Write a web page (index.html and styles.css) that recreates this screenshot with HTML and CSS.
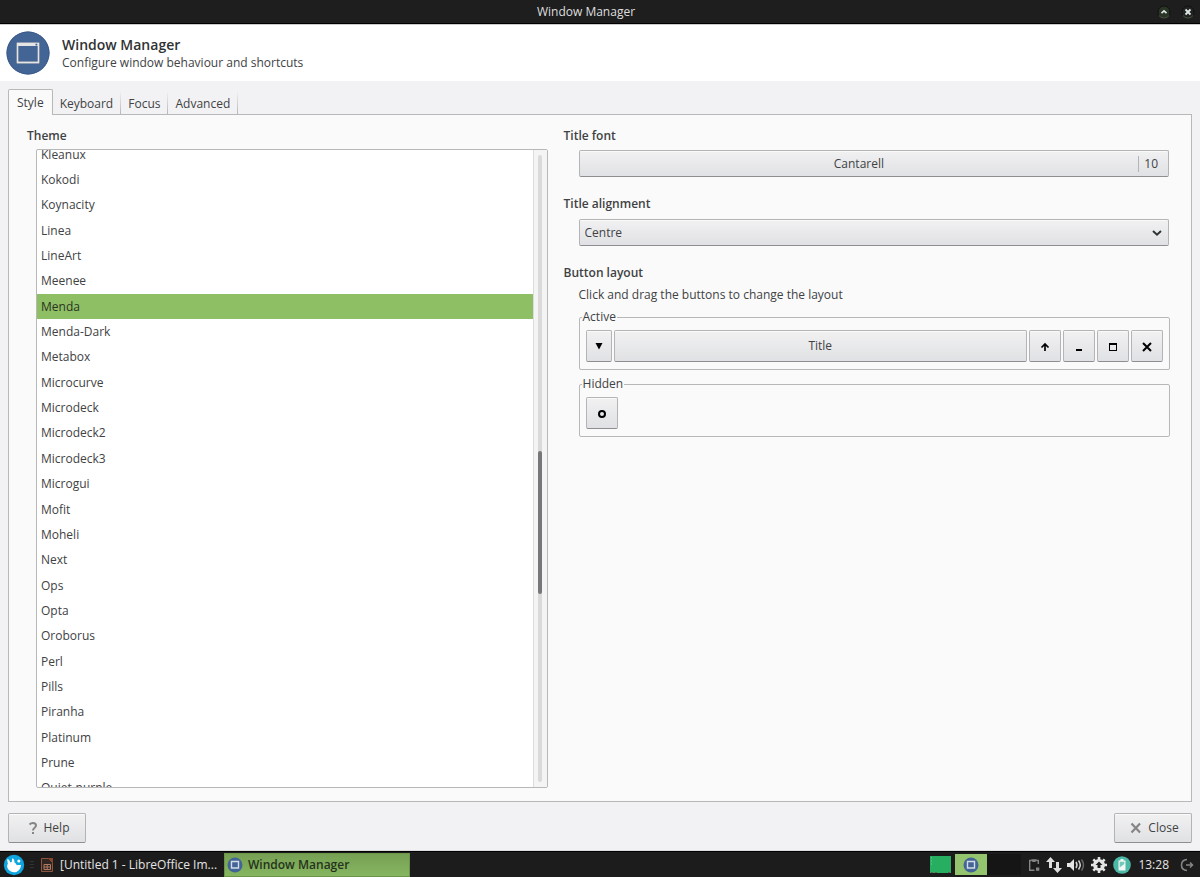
FILE: index.html
```
<!DOCTYPE html>
<html lang="en">
<head>
<meta charset="utf-8">
<title>Window Manager</title>
<link rel="stylesheet" href="styles.css">
</head>
<body class="desktop">
<header class="titlebar">
  <span class="titlebar-text">Window Manager</span>
  <div class="titlebar-buttons">
    <button class="title-button" aria-label="Shade"><svg width="14" height="14" viewBox="0 0 14 14"><circle cx="7" cy="7" r="6" fill="#2b3526" stroke="#111"/><path d="M2 10.5a6.2 6.2 0 0 0 10 0" fill="none" stroke="#5b6b50" stroke-width=".8"/><path d="M4.500 8.200 7 5.800l2.500 2.400" fill="none" stroke="#dfe8e4" stroke-width="1.600"/></svg></button>
    <button class="title-button" aria-label="Close window"><svg width="14" height="14" viewBox="0 0 14 14"><circle cx="7" cy="7" r="6" fill="#20231f" stroke="#111"/><path d="M2 10.500a6.200 6.200 0 0 0 10 0" fill="none" stroke="#5b6b50" stroke-width=".8"/><path d="m4.500 4.500 5 5m0-5-5 5" stroke="#dfe8e8" stroke-width="1.800"/></svg></button>
  </div>
</header>

<section class="banner">
  <svg class="banner-icon" width="44" height="44" viewBox="0 0 44 44"><circle cx="22" cy="22" r="21.500" fill="#436596"/><circle cx="22" cy="22" r="21" fill="none" stroke="#3b5b8b"/><path d="M11.500 12.500h21v19h-21z" fill="none" stroke="#35527d" stroke-width="3"/><path d="M11.500 12.500h21v19h-21z" fill="none" stroke="#e4e4e4" stroke-width="1.800"/><path d="M11 12h22v3H11z" fill="#e4e4e4"/><path d="M29.500 12.700h1.800v1.800h-1.800z" fill="#436596"/></svg>
  <div class="banner-text">
    <h1 class="banner-title">Window Manager</h1>
    <p class="banner-subtitle">Configure window behaviour and shortcuts</p>
  </div>
</section>

<main class="dialog">
  <div class="tabs" role="tablist">
    <button class="tab tab-active" role="tab" aria-selected="true">Style</button>
    <button class="tab" role="tab" aria-selected="false">Keyboard</button>
    <button class="tab" role="tab" aria-selected="false">Focus</button>
    <button class="tab" role="tab" aria-selected="false">Advanced</button>
  </div>

  <div class="panel" role="tabpanel">
    <section class="theme">
      <h2 class="heading" id="theme-label">Theme</h2>
      <div class="theme-frame">
        <div class="theme-view">
          <ul class="theme-list" role="listbox" aria-labelledby="theme-label">
            <li class="theme-item" role="option">Kleanux</li>
            <li class="theme-item" role="option">Kokodi</li>
            <li class="theme-item" role="option">Koynacity</li>
            <li class="theme-item" role="option">Linea</li>
            <li class="theme-item" role="option">LineArt</li>
            <li class="theme-item" role="option">Meenee</li>
            <li class="theme-item theme-selected" role="option" aria-selected="true">Menda</li>
            <li class="theme-item" role="option">Menda-Dark</li>
            <li class="theme-item" role="option">Metabox</li>
            <li class="theme-item" role="option">Microcurve</li>
            <li class="theme-item" role="option">Microdeck</li>
            <li class="theme-item" role="option">Microdeck2</li>
            <li class="theme-item" role="option">Microdeck3</li>
            <li class="theme-item" role="option">Microgui</li>
            <li class="theme-item" role="option">Mofit</li>
            <li class="theme-item" role="option">Moheli</li>
            <li class="theme-item" role="option">Next</li>
            <li class="theme-item" role="option">Ops</li>
            <li class="theme-item" role="option">Opta</li>
            <li class="theme-item" role="option">Oroborus</li>
            <li class="theme-item" role="option">Perl</li>
            <li class="theme-item" role="option">Pills</li>
            <li class="theme-item" role="option">Piranha</li>
            <li class="theme-item" role="option">Platinum</li>
            <li class="theme-item" role="option">Prune</li>
            <li class="theme-item" role="option">Quiet-purple</li>
          </ul>
        </div>
        <div class="scrollbar"><div class="scroll-track"><div class="scroll-before"></div><div class="scroll-thumb"></div><div class="scroll-after"></div></div></div>
      </div>
    </section>

    <section class="options">
      <h2 class="heading">Title font</h2>
      <button class="control font-button"><span class="font-name">Cantarell</span><span class="font-size">10</span></button>

      <label class="heading" for="alignment">Title alignment</label>
      <div class="select-wrap">
        <select class="control select" id="alignment"><option>Centre</option></select>
        <svg class="chevron" width="10" height="8" viewBox="0 0 10 8"><path d="m1 2 4 3.700L9 2" fill="none" stroke="#2e3436" stroke-width="2"/></svg>
      </div>

      <h2 class="heading">Button layout</h2>
      <p class="hint">Click and drag the buttons to change the layout</p>
      <fieldset class="group">
        <legend class="legend">Active</legend>
        <div class="layout-row">
          <button class="layout-button layout-menu" aria-label="Menu"><svg width="8" height="8" viewBox="0 0 8 8"><path d="M.5 1h7L4 7.500z"/></svg></button>
          <button class="layout-button layout-title">Title</button>
          <button class="layout-button" aria-label="Shade"><svg class="glyph" width="10" height="10" viewBox="0 0 10 10"><path d="M5 9V3M1.500 5.500 5 2l3.500 3.500" fill="none" stroke="#000" stroke-width="1.700"/></svg></button>
          <button class="layout-button" aria-label="Minimise"><svg class="glyph" width="10" height="10" viewBox="0 0 10 10"><path d="M2 7h6v2H2z"/></svg></button>
          <button class="layout-button" aria-label="Maximise"><svg class="glyph" width="10" height="10" viewBox="0 0 10 10"><path d="M1 1h8v8H1zM2 3v5h6V3z" fill-rule="evenodd"/></svg></button>
          <button class="layout-button" aria-label="Close"><svg class="glyph" width="10" height="10" viewBox="0 0 10 10"><path d="m1 1 8 8m0-8-8 8" stroke="#000" stroke-width="2"/></svg></button>
        </div>
      </fieldset>
      <fieldset class="group">
        <legend class="legend">Hidden</legend>
        <div class="layout-row">
          <button class="layout-button" aria-label="Stick"><svg class="glyph" width="10" height="10" viewBox="0 0 10 10"><circle cx="5" cy="5" r="3" fill="none" stroke="#000" stroke-width="2"/></svg></button>
        </div>
      </fieldset>
    </section>
  </div>

  <div class="actions">
    <button class="action"><svg width="10" height="14" viewBox="0 0 10 14"><path d="M1.500 3.500Q3 2 5 2q3 0 3 2.500C8 7 5 6.500 5 9.500M5 11v2" fill="none" stroke="#858585" stroke-width="2"/></svg>Help</button>
    <button class="action action-close"><svg width="12" height="12" viewBox="0 0 12 12"><path d="m1.500 1.500 8.500 9m0-9-8.500 9" stroke="#858585" stroke-width="2.200"/></svg>Close</button>
  </div>
</main>

<footer class="taskbar">
  <button class="menu" aria-label="Applications"><svg width="22" height="22" viewBox="0 0 22 22"><circle cx="11" cy="11" r="10.200" fill="#0fa5df"/><path d="M4.300 5c1.300 0 2.400 1.300 3 3.400.6-.4 1-.5 1.600-.5-.2-1.600.1-3 .9-3.600 1.200.8 1.700 2.300 1.700 4.200 1 .5 1.700 1.400 2.300 2.700 1.300-.4 2.800-.4 4.300-.1-.3 3.400-2 5.700-4.700 6.800-3.600 1-7.600-.6-8.900-3.900-.6-1.700-.4-3 .4-4.300C4.600 8.200 4 6.500 4.300 5z" fill="#fff"/><circle cx="15.800" cy="7" r="1.500" fill="#fff"/></svg></button>
  <svg class="grip" width="4" height="10" viewBox="0 0 4 10"><path d="M0 1.500h4M0 4.500h4M0 7.500h4" stroke="#333"/></svg>
  <button class="task"><svg width="16" height="16" viewBox="0 0 16 16"><path d="M2.500 1.500h7l4 4v9h-11z" fill="#302621" stroke="#8e5440"/><path d="M9 1h5v5z" fill="#8a432b"/><path d="M5 7.500h6.500v5H5zM5 10h6.500M8.200 7.500v5" fill="none" stroke="#b07a60"/></svg><span class="task-text">[Untitled 1 - LibreOffice Im...</span></button>
  <button class="task task-active"><svg width="16" height="16" viewBox="0 0 16 16"><circle cx="8" cy="8" r="7.500" fill="#436596"/><path d="M4.500 4.500h7v6.500h-7z" fill="none" stroke="#d5dce6" stroke-width="1.400"/></svg><span class="task-text">Window Manager</span></button>
  <div class="pager">
    <button class="desk desk-green" aria-label="Workspace 1"><svg width="21" height="17" viewBox="0 0 21 17"><path d="M0 0h21v17H0z" fill="#27ae60"/><path d="M1 2h1M1 5h1M1 8h1" stroke="#74d69c"/><path d="M1 16.500h2m2 0h2m11 0h2" stroke="#6b5a4a"/></svg></button>
    <button class="desk desk-current" aria-label="Workspace 2"><svg width="16" height="16" viewBox="0 0 16 16"><circle cx="8" cy="8" r="7.500" fill="#436596"/><path d="M4.500 4.500h7v6.500h-7z" fill="none" stroke="#d5dce6" stroke-width="1.400"/></svg></button>
    <div class="desk desk-empty"></div>
  </div>
  <div class="tray">
    <svg width="14" height="14" viewBox="0 0 14 14"><path d="M4.500 2.500H2.700v9.800H7.500M9.500 2.500h1.800V6" fill="none" stroke="#858585" stroke-width="1.400"/><path d="M4.300 1.300h5.400v1.700H8.700v1H5.300v-1h-1zM9 9.500h3.300v3.300H9z" fill="#858585"/></svg>
    <svg width="16" height="16" viewBox="0 0 16 16"><path d="M4.500 0 0 5h3v6h3V5h3zM11.500 16l4.500-5h-3V5h-3v6H7z" fill="#dedede"/></svg>
    <svg width="18" height="14" viewBox="0 0 18 14"><path d="M0 5h3l4-4v12L3 9H0z" fill="#e5e5e5"/><path d="M9 4q2 3 0 6M11.500 2.500q3.500 4.500 0 9" fill="none" stroke="#d5d5d5" stroke-width="1.500"/><path d="M14.500 1.500q4 5.500 0 11" fill="none" stroke="#666" stroke-width="1.500"/></svg>
    <svg width="18" height="18" viewBox="0 0 18 18"><path d="M9 1v16M1 9h16M3.300 3.300l11.400 11.400m0-11.400L3.300 14.700" stroke="#e4e4e4" stroke-width="2.600"/><circle cx="9" cy="9" r="6" fill="#e4e4e4"/><path d="m9 5.500 3.500 3.500h-2v3h-3V9h-2z" fill="#1c1c1c"/></svg>
    <svg width="18" height="18" viewBox="0 0 18 18"><circle cx="9" cy="9" r="8.800" fill="#4bb9a5"/><path d="M7.500 3h3v1.500h2v10h-7v-10h2z" fill="#f1f8f5"/><path d="M6.700 5.700h4.600v2.300l-4.600 3.500z" fill="#6fc8b8"/></svg>
  </div>
  <time class="clock">13:28</time>
  <button class="logout" aria-label="Log out"><svg width="14" height="14" viewBox="0 0 14 14"><path d="M7 1.500Q1.500 2 1.500 7T7 12.500" fill="none" stroke="#858585" stroke-width="1.600"/><path d="M6 7h6M10 4.500 12.500 7 10 9.500" fill="none" stroke="#858585" stroke-width="1.500"/></svg></button>
</footer>
</body>
</html>
```
FILE: styles.css
```
* { box-sizing: border-box; }

.desktop {
  margin: 0;
  min-height: 100vh;
  display: flex;
  flex-direction: column;
  background: #f2f2f4;
  color: #404244;
  font: 12px/16px "Open Sans", "Noto Sans", sans-serif;
}

button, select { font: inherit; color: inherit; margin: 0; }
svg { display: block; flex: none; }

.titlebar {
  height: 24px;
  display: flex;
  align-items: center;
  padding: 0 5px 0 15px;
  background: #1e1e1e;
  border-bottom: 1px solid #000;
  color: #dedede;
}
.titlebar-text { flex: 1; text-align: center; }
.titlebar-buttons { display: flex; gap: 10px; }
.title-button { padding: 0; border: 0; background: none; }

.banner {
  display: flex;
  align-items: center;
  gap: 12px;
  height: 57px;
  padding: 0 6px 1px;
  background: #fff;
  border-top: 1px solid #ccc;
}
.banner-text { display: flex; flex-direction: column; padding-top: 2px; }
.banner-title {
  margin: 0;
  font-size: 14px;
  line-height: 18px;
  font-weight: 600;
  color: #303234;
}
.banner-subtitle { margin: 0; line-height: 18px; }

.dialog {
  flex: 1;
  display: flex;
  flex-direction: column;
  padding: 8px 8px 7px;
  border-bottom: 1px solid #ddd;
}

.tabs { display: flex; align-items: flex-end; }
.tab {
  height: 22px;
  padding: 2px 7px 0;
  border: 0;
  border-right: 1px solid #c0c0c2;
  border-image: linear-gradient(#f2f2f4, #b4b4b6) 1;
  background: none;
}
.tab-active {
  position: relative;
  z-index: 1;
  height: 26px;
  margin-bottom: -1px;
  padding: 0 8px;
  border: 1px solid #b8b8b8;
  border-bottom: 0;
  border-image: none;
  border-radius: 2px 2px 0 0;
  background: #fafafa;
}

.panel {
  flex: 1;
  display: grid;
  grid-template-columns: 521fr 606fr;
  gap: 16px;
  padding: 13px 22px 13px 18px;
  background: #fafafa;
  border: 1px solid #b8b8b8;
}
.heading {
  display: block;
  margin: 0;
  font-size: 12px;
  line-height: 16px;
  font-weight: 600;
}

.theme { display: flex; flex-direction: column; gap: 5px; }
.theme-frame {
  flex: 1;
  display: flex;
  margin-left: 9px;
  border: 1px solid #b8b8b8;
  border-radius: 2px;
  background: #fff;
}
.theme-view { flex: 1; display: flex; overflow: hidden; }
.theme-list {
  flex: 1;
  display: grid;
  grid-auto-rows: 1fr;
  margin: -8px 0 -14px;
  padding: 0;
  list-style: none;
}
.theme-item { display: flex; align-items: center; padding: 0 4px; }
.theme-selected { background: #8fbf65; color: #2a3322; }
.scrollbar {
  width: 14px;
  display: flex;
  justify-content: center;
  padding: 5px 0;
  border-left: 1px solid #dcdcdc;
  background: #f4f4f5;
}
.scroll-track { width: 4px; display: flex; flex-direction: column; border-radius: 2px; background: #dadadb; }
.scroll-before { flex: 296; }
.scroll-thumb { flex: 143; border-radius: 2px; background: #77777a; }
.scroll-after { flex: 188; }

.options { display: flex; flex-direction: column; }
.control {
  width: 100%;
  height: 27px;
  border: 1px solid #b4b4b6;
  border-bottom-color: #8e8e90;
  border-radius: 2px;
  background: linear-gradient(#f1f1f2, #e0e1e4);
  box-shadow: inset 0 1px #fafafa;
}
.font-button {
  display: flex;
  align-items: center;
  width: auto;
  margin: 6px 0 19px 15px;
  padding: 0 10px 0 0;
}
.font-name { flex: 1; text-align: center; }
.font-size { padding-left: 5px; border-left: 1px solid #b4b4b6; }
.select-wrap { display: grid; align-items: center; margin: 7px 0 19px 15px; }
.select { grid-area: 1 / 1; padding: 0 5px; appearance: none; }
.chevron { grid-area: 1 / 1; justify-self: end; margin-right: 7px; pointer-events: none; }
.hint { margin: 6px 0 6px 15px; }

.group {
  min-width: 0;
  margin: 0 0 6px 15px;
  padding: 5px 6px 7px;
  border: 1px solid #b8b8b8;
  border-radius: 2px;
}
.options .group { margin-right: -1px; }
.legend { margin-left: -4px; padding: 0 1px; line-height: 16px; }
.layout-row { display: flex; gap: 2px; }
.layout-button {
  display: flex;
  align-items: center;
  justify-content: center;
  width: 32px;
  height: 32px;
  padding: 0;
  border: 1px solid #b4b4b6;
  border-bottom-color: #8e8e90;
  border-radius: 2px;
  background: linear-gradient(#f1f1f2, #e0e1e4);
  box-shadow: inset 0 1px #fafafa;
}
.layout-menu { width: 26px; }
.layout-title { flex: 1; }
.glyph { margin-top: 2px; }

.actions { display: flex; justify-content: space-between; margin-top: 11px; }
.action {
  display: flex;
  align-items: center;
  justify-content: center;
  gap: 6px;
  width: 78px;
  height: 30px;
  padding: 0 0 0 3px;
  border: 1px solid #b4b4b6;
  border-bottom-color: #8e8e90;
  border-radius: 2px;
  background: linear-gradient(#f1f1f2, #e0e1e4);
  box-shadow: inset 0 1px #fafafa;
}

.taskbar {
  display: flex;
  align-items: center;
  height: 26px;
  padding: 0 6px 0 3px;
  background: #1c1c1c;
  border-top: 1px solid #000;
  color: #e4e4e4;
}
.menu, .logout, .task, .desk { padding: 0; border: 0; background: none; }
.grip { margin: 0 4px 0 5px; }
.task {
  display: flex;
  align-items: center;
  gap: 5px;
  width: 186px;
  height: 24px;
  padding: 0 1px;
  white-space: nowrap;
}
.task-active {
  padding: 0 2px;
  border: 1px solid #6c9449;
  background: linear-gradient(#76a054, #86b660);
  color: #26331c;
  font-weight: 600;
}
.pager { display: flex; align-items: center; margin-left: auto; }
.desk { height: 21px; display: flex; align-items: center; justify-content: center; }
.desk-green { width: 21px; margin-right: 4px; }
.desk-current { width: 32px; background: #94c46e; }
.desk-empty { width: 34px; background: #151515; }
.tray { display: flex; align-items: center; gap: 5px; margin-left: 6px; }
.clock { margin: 0 11px 0 7px; }
```
